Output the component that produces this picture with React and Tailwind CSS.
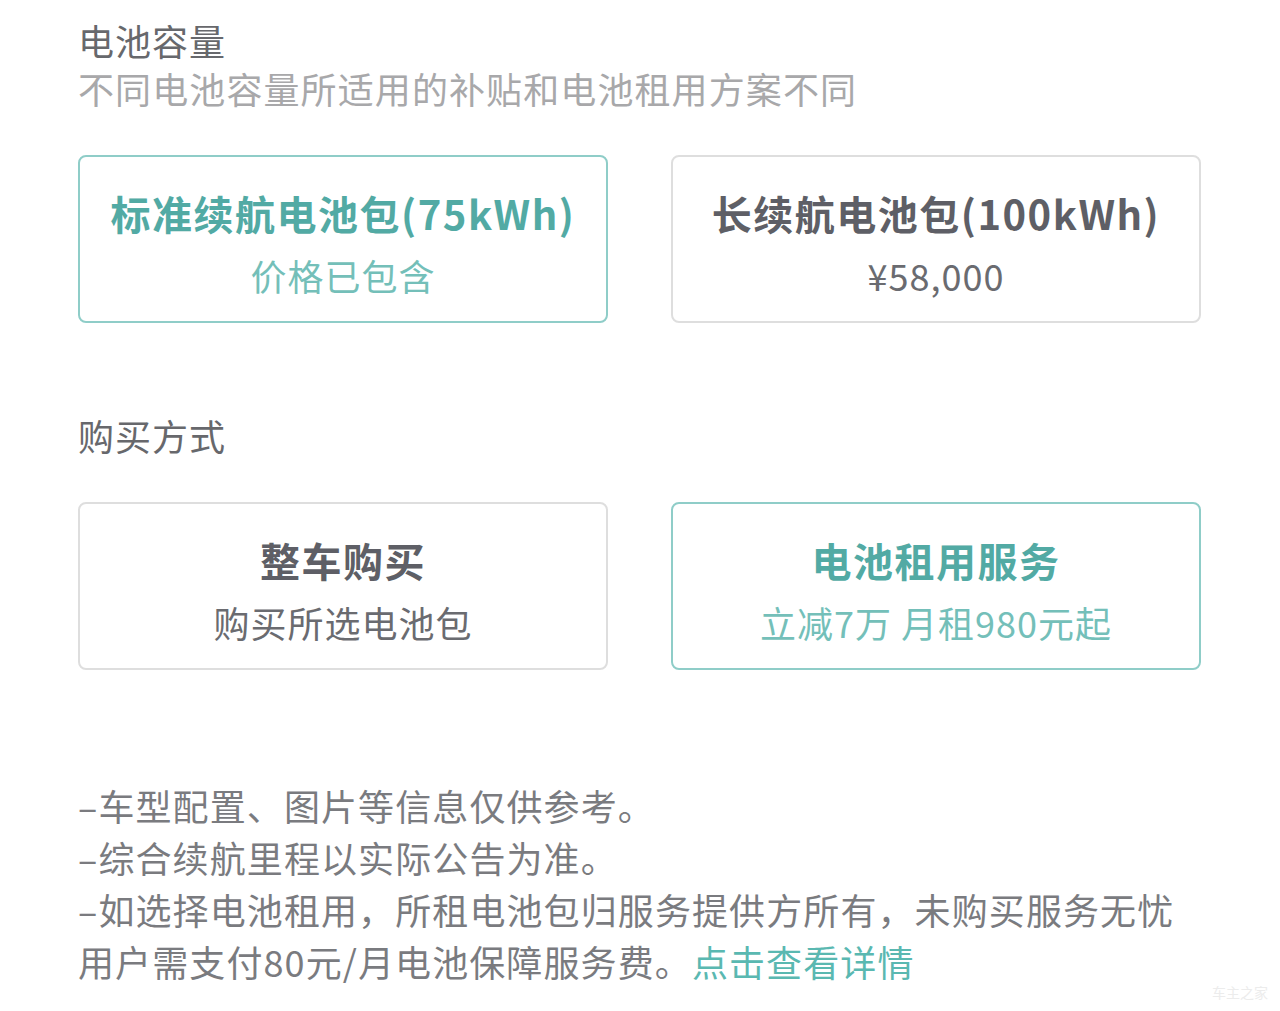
import React from 'react';

const font = { fontFamily: '"Noto Sans CJK SC", "Noto Sans", sans-serif' };

function OptionCard({ title, sub, active }) {
  return (
    <div
      className={`h-[168px] rounded-[8px] border-2 flex flex-col items-center pt-[30px] ${
        active ? 'border-[#8fcdc8]' : 'border-[#dedede]'
      }`}
    >
      <div
        className={`text-[40px] leading-[52px] font-semibold tracking-[1.5px] ${
          active ? 'text-[#52aaa4]' : 'text-[#5e5f66]'
        }`}
      >
        {title}
      </div>
      <div
        className={`mt-[12px] text-[36px] leading-[48px] tracking-[1px] ${
          active ? 'text-[#74bfb9]' : 'text-[#6a6b70]'
        }`}
      >
        {sub}
      </div>
    </div>
  );
}

export default function App() {
  return (
    <div className="relative w-[1280px] h-[1011px] bg-white overflow-hidden" style={font}>
      <div className="px-[78px] pt-[16px]">
        {/* battery capacity */}
        <div className="text-[36px] leading-[48px] text-[#67686c] tracking-[1px]">电池容量</div>
        <div className="text-[36px] leading-[48px] text-[#a8a8aa] tracking-[1.1px]">
          不同电池容量所适用的补贴和电池租用方案不同
        </div>

        <div className="mt-[43px] grid grid-cols-2 gap-[63px] pr-[1px]">
          <OptionCard title="标准续航电池包(75kWh)" sub="价格已包含" active />
          <OptionCard title="长续航电池包(100kWh)" sub="¥58,000" />
        </div>

        {/* purchase method */}
        <div className="mt-[88px] text-[36px] leading-[48px] text-[#67686c] tracking-[1px]">购买方式</div>

        <div className="mt-[43px] grid grid-cols-2 gap-[63px] pr-[1px]">
          <OptionCard title="整车购买" sub="购买所选电池包" />
          <OptionCard title="电池租用服务" sub="立减7万 月租980元起" active />
        </div>

        {/* notes */}
        <div className="mt-[109px] text-[36px] leading-[52px] text-[#7a7b7f] tracking-[1.1px]">
          <div>–车型配置、图片等信息仅供参考。</div>
          <div>–综合续航里程以实际公告为准。</div>
          <div>–如选择电池租用，所租电池包归服务提供方所有，未购买服务无忧</div>
          <div>
            用户需支付80元/月电池保障服务费。<span className="text-[#5ab8b1]">点击查看详情</span>
          </div>
        </div>
      </div>

      <div className="absolute right-[12px] bottom-[8px] text-[14px] text-[#ececec]">车主之家</div>
    </div>
  );
}
